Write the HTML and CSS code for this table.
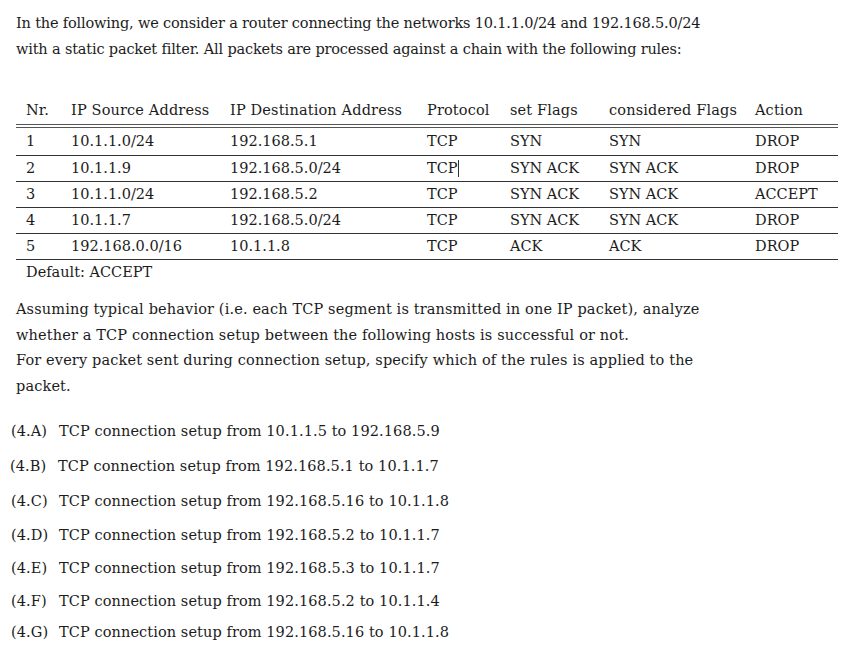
FILE: index.html
```html
<!DOCTYPE html>
<html lang="en">
<head>
<meta charset="utf-8">
<title>Packet filter exercise</title>
<link rel="stylesheet" href="styles.css">
</head>
<body>
<div class="page">
  <p class="intro">In the following, we consider a router connecting the networks 10.1.1.0/24 and 192.168.5.0/24<br>with a static packet filter. All packets are processed against a chain with the following rules:</p>

  <table class="rules">
    <colgroup>
      <col class="c-nr"><col class="c-src"><col class="c-dst"><col class="c-proto"><col class="c-set"><col class="c-cons"><col class="c-act">
    </colgroup>
    <thead>
      <tr><th class="nr">Nr.</th><th>IP Source Address</th><th>IP Destination Address</th><th>Protocol</th><th>set Flags</th><th>considered Flags</th><th>Action</th></tr>
    </thead>
    <tbody>
      <tr class="first"><td class="nr">1</td><td>10.1.1.0/24</td><td>192.168.5.1</td><td>TCP</td><td>SYN</td><td>SYN</td><td>DROP</td></tr>
      <tr><td class="nr">2</td><td>10.1.1.9</td><td>192.168.5.0/24</td><td>TCP<span class="caret"></span></td><td>SYN ACK</td><td>SYN ACK</td><td>DROP</td></tr>
      <tr><td class="nr">3</td><td>10.1.1.0/24</td><td>192.168.5.2</td><td>TCP</td><td>SYN ACK</td><td>SYN ACK</td><td>ACCEPT</td></tr>
      <tr><td class="nr">4</td><td>10.1.1.7</td><td>192.168.5.0/24</td><td>TCP</td><td>SYN ACK</td><td>SYN ACK</td><td>DROP</td></tr>
      <tr><td class="nr">5</td><td>192.168.0.0/16</td><td>10.1.1.8</td><td>TCP</td><td>ACK</td><td>ACK</td><td>DROP</td></tr>
    </tbody>
  </table>
  <p class="default">Default: ACCEPT</p>

  <p class="task">Assuming typical behavior (i.e. each TCP segment is transmitted in one IP packet), analyze<br>whether a TCP connection setup between the following hosts is successful or not.<br>For every packet sent during connection setup, specify which of the rules is applied to the<br>packet.</p>

  <ul class="parts">
    <li><span class="label">(4.A)</span>TCP connection setup from 10.1.1.5 to 192.168.5.9</li>
    <li class="shift"><span class="label">(4.B)</span>TCP connection setup from 192.168.5.1 to 10.1.1.7</li>
    <li><span class="label">(4.C)</span>TCP connection setup from 192.168.5.16 to 10.1.1.8</li>
    <li><span class="label">(4.D)</span>TCP connection setup from 192.168.5.2 to 10.1.1.7</li>
    <li><span class="label">(4.E)</span>TCP connection setup from 192.168.5.3 to 10.1.1.7</li>
    <li><span class="label">(4.F)</span>TCP connection setup from 192.168.5.2 to 10.1.1.4</li>
    <li><span class="label">(4.G)</span>TCP connection setup from 192.168.5.16 to 10.1.1.8</li>
  </ul>
</div>
</body>
</html>
```

FILE: styles.css
```css
html, body {
  margin: 0;
  padding: 0;
  background: #ffffff;
}

body {
  font-family: "DejaVu Serif", "Liberation Serif", serif;
  font-size: 14.5px;
  color: #1c1c1c;
}

.page {
  padding: 10px 0 0 0;
}

.intro {
  margin: 0 0 0 16px;
  line-height: 26px;
  letter-spacing: -0.17px;
}

.rules {
  margin: 35px 0 0 16px;
  width: 822px;
  border-collapse: collapse;
  table-layout: fixed;
}

.c-nr { width: 55px; }
.c-src { width: 159px; }
.c-dst { width: 197px; }
.c-proto { width: 83px; }
.c-set { width: 99px; }
.c-cons { width: 146px; }
.c-act { width: 83px; }

.rules th,
.rules td {
  padding: 0;
  text-align: left;
  font-weight: normal;
  white-space: nowrap;
  height: 25px;
  line-height: 25px;
}

.rules th {
  height: 27px;
  line-height: 25.5px;
  letter-spacing: 0.15px;
  border-bottom: 4px double #555555;
}

.rules td {
  border-bottom: 1px solid #333333;
}

.rules tr.first td {
  height: 27px;
  line-height: 27px;
}

.rules .nr {
  padding-left: 10px;
}

.caret {
  display: inline-block;
  width: 1px;
  height: 17px;
  background: #333333;
  vertical-align: -4px;
}

.default {
  margin: 0 0 0 26px;
  line-height: 24px;
}

.task {
  margin: 13px 0 0 16px;
  line-height: 25.5px;
  letter-spacing: 0.14px;
}

.parts {
  list-style: none;
  margin: 19px 0 0 11px;
  padding: 0;
  letter-spacing: 0.09px;
}

.parts li {
  line-height: 26px;
  white-space: nowrap;
}

.parts li:nth-child(2),
.parts li:nth-child(3) { margin-top: 9px; }
.parts li:nth-child(4) { margin-top: 8px; }
.parts li:nth-child(5),
.parts li:nth-child(6) { margin-top: 7px; }
.parts li:nth-child(7) { margin-top: 5px; }

.parts li.shift {
  margin-left: -1px;
}

.label {
  display: inline-block;
  width: 48px;
}
```
